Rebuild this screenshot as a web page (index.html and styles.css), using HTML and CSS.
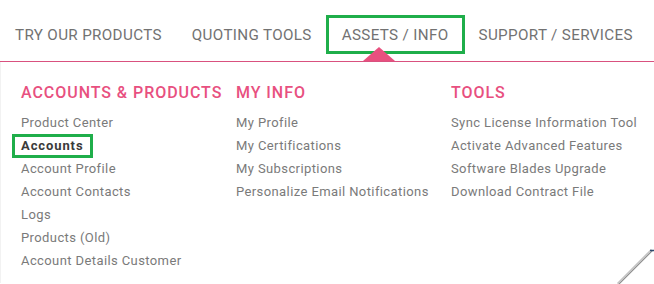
FILE: index.html
```html
<!DOCTYPE html>
<html>
<head>
<meta charset="utf-8">
<link rel="stylesheet" href="styles.css">
</head>
<body>
<div class="page">
  <nav class="topnav">
    <a class="nav-item">TRY OUR PRODUCTS</a>
    <a class="nav-item">QUOTING TOOLS</a>
    <a class="nav-item active highlight">ASSETS / INFO</a>
    <a class="nav-item">SUPPORT / SERVICES</a>
  </nav>
  <div class="dropdown">
    <div class="col">
      <h3 class="col-title">ACCOUNTS &amp; PRODUCTS</h3>
      <ul class="links">
        <li><a>Product Center</a></li>
        <li><a class="current highlight-sm">Accounts</a></li>
        <li><a>Account Profile</a></li>
        <li><a>Account Contacts</a></li>
        <li><a>Logs</a></li>
        <li><a>Products (Old)</a></li>
        <li><a>Account Details Customer</a></li>
      </ul>
    </div>
    <div class="col">
      <h3 class="col-title">MY INFO</h3>
      <ul class="links">
        <li><a>My Profile</a></li>
        <li><a>My Certifications</a></li>
        <li><a>My Subscriptions</a></li>
        <li><a>Personalize Email Notifications</a></li>
      </ul>
    </div>
    <div class="col">
      <h3 class="col-title">TOOLS</h3>
      <ul class="links">
        <li><a>Sync License Information Tool</a></li>
        <li><a>Activate Advanced Features</a></li>
        <li><a>Software Blades Upgrade</a></li>
        <li><a>Download Contract File</a></li>
      </ul>
    </div>
  </div>
  <svg class="corner" width="40" height="40" viewBox="0 0 40 40">
    <line x1="4" y1="40" x2="38" y2="6" stroke="#c4c4c4" stroke-width="3" />
    <line x1="5" y1="40" x2="39" y2="6" stroke="#909090" stroke-width="1" />
    <line x1="36" y1="6.5" x2="40" y2="6.5" stroke="#2c4a6e" stroke-width="1.5" />
  </svg>
</div>
</body>
</html>
```
FILE: styles.css
```css
html, body {
  margin: 0;
  padding: 0;
  background: #ffffff;
}
body {
  font-family: Roboto, "Liberation Sans", sans-serif;
  width: 654px;
  height: 284px;
  overflow: hidden;
}
.page {
  position: relative;
  width: 654px;
  height: 284px;
}
.topnav {
  display: flex;
  height: 61px;
  border-bottom: 1px solid #d9517f;
  box-sizing: content-box;
}
.nav-item {
  position: relative;
  display: flex;
  align-items: center;
  height: 37px;
  margin-top: 16px;
  padding: 0 15px;
  font-size: 15.2px;
  letter-spacing: 0.35px;
  color: #727272;
  white-space: nowrap;
}
.highlight {
  outline: 3px solid #1fae4a;
  outline-offset: -2px;
}
.nav-item.active::after {
  content: "";
  position: absolute;
  left: 36px;
  bottom: -8px;
  border-left: 16px solid transparent;
  border-right: 16px solid transparent;
  border-bottom: 14px solid #e8507f;
}
.dropdown {
  display: flex;
  padding: 21px 0 0 21px;
  box-shadow: inset 1px 0 0 #f2f2f2;
  height: 200px;
}
.col {
  width: 215px;
  flex-shrink: 0;
}
.col-title {
  margin: 0 0 8px 0;
  font-size: 16px;
  line-height: 20px;
  font-weight: 500;
  letter-spacing: 0.95px;
  color: #e8507f;
  white-space: nowrap;
}
.links {
  list-style: none;
  margin: 0;
  padding: 0;
}
.links li {
  height: 23px;
  line-height: 23px;
  font-size: 13px;
  letter-spacing: 0.4px;
  color: #7a7a7a;
  white-space: nowrap;
}
.links a.current {
  font-weight: 700;
  letter-spacing: 0.9px;
  color: #3a3a3a;
}
.highlight-sm {
  display: inline-block;
  margin-left: -9px;
  padding: 0 10px 0 9px;
  line-height: 24px;
  height: 24px;
  box-shadow: inset 0 0 0 3px #1fae4a;
  box-sizing: border-box;
  vertical-align: top;
  margin-top: -0.5px;
}
.corner {
  position: absolute;
  right: 0;
  bottom: 0;
}
```
